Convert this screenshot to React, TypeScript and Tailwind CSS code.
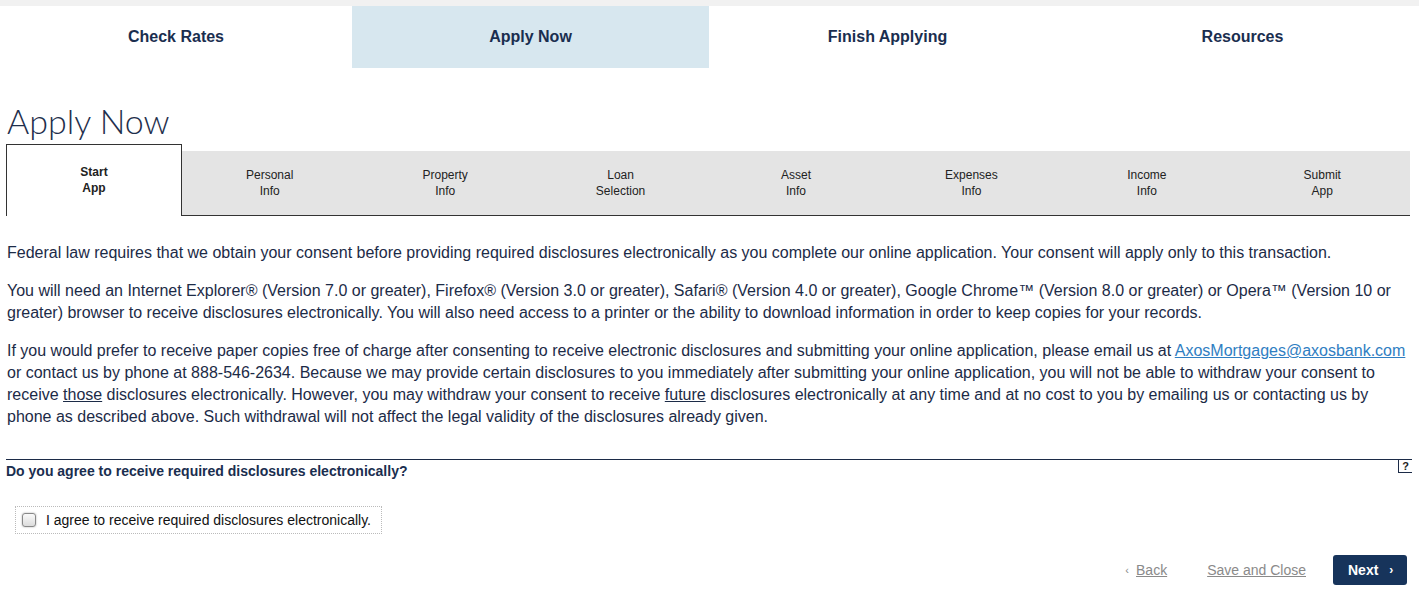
import React from "react";

const steps = [
  ["Personal", "Info"],
  ["Property", "Info"],
  ["Loan", "Selection"],
  ["Asset", "Info"],
  ["Expenses", "Info"],
  ["Income", "Info"],
  ["Submit", "App"],
];

export default function App() {
  return (
    <div className="min-h-[594px] bg-white text-[#1c2b47]" style={{ fontFamily: '"Liberation Sans", Arial, sans-serif' }}>
      <div className="h-[6px] bg-[#f1f1f1]" />
      <nav className="grid h-[62px] grid-cols-[352px_357px_357px_1fr] text-[16px] font-bold text-[#1a2e4f]">
        <div className="flex items-center justify-center">Check Rates</div>
        <div className="flex items-center justify-center bg-[#d7e7ef]">Apply Now</div>
        <div className="flex items-center justify-center">Finish Applying</div>
        <div className="flex items-center justify-center">Resources</div>
      </nav>

      <div className="pl-[6px] pr-[9px]">
        <h1
          className="mt-[32px] h-[44px] pl-[1px] text-[34px] font-light leading-[41px] text-[#1f2f4c]"
          style={{ fontFamily: 'Lato, "Open Sans", sans-serif' }}
        >
          Apply Now
        </h1>

        <div className="flex h-[72px] items-end text-[12px] leading-[16px] text-[#222]">
          <div className="flex h-full w-[176px] flex-col items-center justify-center border-x border-t border-[#333] bg-white pb-[2px] font-bold">
            <span>Start</span>
            <span>App</span>
          </div>
          <div className="flex h-[65px] flex-1 border-b border-[#333] bg-[#e4e4e4]">
            {steps.map(([a, b]) => (
              <div key={a} className="flex flex-1 flex-col items-center justify-center">
                <span>{a}</span>
                <span>{b}</span>
              </div>
            ))}
          </div>
        </div>

        <div className="mt-[26px] pl-[1px] text-[16px] leading-[22px]">
          <p>
            Federal law requires that we obtain your consent before providing required disclosures electronically as you complete our online application. Your consent will apply only to this transaction.
          </p>
          <p className="mt-[16px]">
            You will need an Internet Explorer® (Version 7.0 or greater), Firefox® (Version 3.0 or greater), Safari® (Version 4.0 or greater), Google Chrome™ (Version 8.0 or greater) or Opera™ (Version 10 or greater) browser to receive disclosures electronically. You will also need access to a printer or the ability to download information in order to keep copies for your records.
          </p>
          <p className="mt-[16px]">
            If you would prefer to receive paper copies free of charge after consenting to receive electronic disclosures and submitting your online application, please email us at{" "}
            <a href="#" className="text-[#2f7ec2] underline">AxosMortgages@axosbank.com</a> or contact us by phone at 888-546-2634. Because we may provide certain disclosures to you immediately after submitting your online application, you will not be able to withdraw your consent to receive <span className="underline">those</span> disclosures electronically. However, you may withdraw your consent to receive <span className="underline">future</span> disclosures electronically at any time and at no cost to you by emailing us or contacting us by phone as described above. Such withdrawal will not affect the legal validity of the disclosures already given.
          </p>
        </div>

        <div className="mt-[31px] mr-[-2px] flex border-t border-[#1c2b47]">
          <div className="flex-1 pt-[1px] text-[14px] font-bold leading-[20px] text-[#1a2e4f]">
            Do you agree to receive required disclosures electronically?
          </div>
          <div className="flex h-[13px] w-[14px] items-center justify-center border-b border-l border-[#1c2b47] text-[11px] font-bold leading-none text-[#222]">
            ?
          </div>
        </div>

        <div className="mt-[25px] ml-[9px] flex h-[28px] w-[367px] items-center border border-dotted border-[#bbb] pl-[6px] text-[14px] text-[#111]">
          <span className="flex h-[14px] w-[14px] items-center justify-center rounded-[3px] border border-[#888] bg-gradient-to-b from-[#fafafa] to-[#dcdcdc] shadow-[0_0_2px_rgba(0,0,0,0.35)]" />
          <span className="ml-[10px]">I agree to receive required disclosures electronically.</span>
        </div>

        <div className="mt-[21px] flex items-center justify-end pr-[3px] text-[14px]">
          <span className="flex items-center text-[#8a8a8a]">
            <span className="mr-[7px] text-[11px]">‹</span>
            <span className="underline">Back</span>
          </span>
          <span className="ml-[40px] text-[#8a8a8a] underline">Save and Close</span>
          <button className="ml-[27px] flex h-[30px] w-[74px] items-center rounded-[3px] bg-[#17345b] pl-[15px] text-[14px] font-bold text-white">
            <span>Next</span>
            <span className="ml-[11px] text-[12px]">›</span>
          </button>
        </div>
      </div>
    </div>
  );
}
